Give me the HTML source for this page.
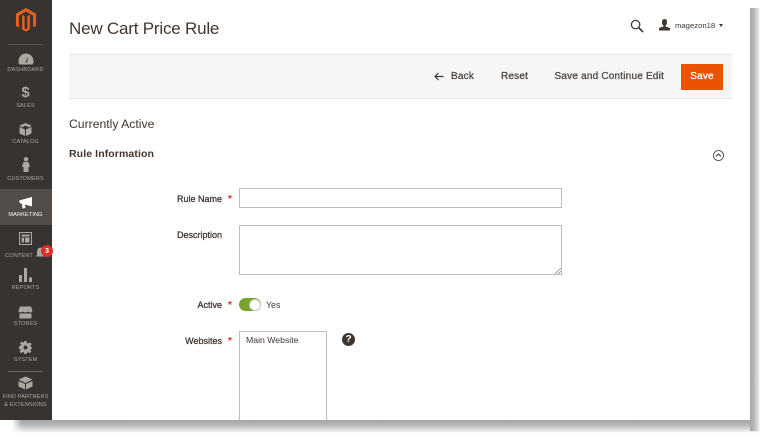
<!DOCTYPE html>
<html><head><meta charset="utf-8"><style>
html,body{margin:0;padding:0;background:#fff}
body{width:768px;height:439px;position:relative;overflow:hidden;font-family:"Liberation Sans",sans-serif;color:#41362f}
#w{position:absolute;left:0;top:0;width:768px;height:439px;filter:blur(.35px)}
.a{position:absolute;white-space:nowrap}
.n{position:absolute;left:0;width:51px;text-align:center;font-size:5.6px;line-height:8px;color:#aaa6a0;letter-spacing:.1px}
.l{position:absolute;right:546px;font-size:9px;line-height:12px;color:#41362f;white-space:nowrap;-webkit-text-stroke:.3px #41362f}
.s{position:absolute;left:228px;color:#e22626;font-size:10px;font-weight:bold;line-height:12px}
.b{position:absolute;font-size:10px;color:#514943;line-height:14px;letter-spacing:.2px;white-space:nowrap;-webkit-text-stroke:.3px #514943}
.i{position:absolute;background:#fff;border:1px solid #bdbdbd;box-sizing:border-box}
svg{position:absolute}
</style></head><body><div id="w">
<div class="a" style="left:12px;top:420px;width:747px;height:13px;background:linear-gradient(#a5a5a5,#b5b5b5 35%,#e8e8e8 85%,#fff);-webkit-mask-image:linear-gradient(90deg,transparent,#000 10px)"></div>
<div class="a" style="left:750px;top:8px;width:10px;height:423px;background:linear-gradient(90deg,#a5a5a5,#b5b5b5 35%,#e8e8e8 90%,#fff)"></div>
<div class="a" style="left:0;top:0;width:750px;height:420px;background:#fff"></div>
<div class="a" style="left:0;top:0;width:51.5px;height:420px;background:#373330"></div>
<div class="a" style="left:0;top:189px;width:51.5px;height:36px;background:#524d49"></div>
<div class="a" style="left:8px;top:44px;width:35px;height:1px;background:#5a5551"></div>
<div class="a" style="left:8px;top:371px;width:35px;height:1px;background:#6a6561"></div>

<svg style="left:15px;top:7px" width="22" height="25" viewBox="0 0 23 26"><path d="M11.500 1L22 7V19.500L19 21.300V9L11.500 4.600 4 9V21.300L1 19.500V7Z" fill="#ea6220"/><path d="M10 9.500V22L11.500 23 13 22V9.500L15.500 8V23.500L11.500 25.500 7.500 23.500V8Z" fill="#ea6220"/></svg>

<svg style="left:18px;top:53px" width="16" height="12" viewBox="0 0 16 12"><path d="M8 .5A7.500 7.500 0 0 1 15.500 8Q15.500 10.500 14.500 11.500H1.500Q.5 10.500 .5 8A7.500 7.500 0 0 1 8 .5Z" fill="#aaa6a0"/><path d="M7.500 9L10 3.500 9 9.500Z" fill="#373330"/></svg>
<div class="n" style="top:65.500px">DASHBOARD</div>
<div class="a" style="left:0;width:51px;text-align:center;top:85px;font-size:15px;font-weight:bold;line-height:16px;color:#aaa6a0">$</div>
<div class="n" style="top:102px">SALES</div>
<svg style="left:19px;top:123px" width="13" height="13" viewBox="0 0 13 13"><path d="M6.500 0L12.500 2.500 10 4.500 6.500 2.500 3 4.500 .5 2.500Z M.5 4L6 6.500V13L.5 10.500Z M12.500 4L7 6.500V13L12.500 10.500Z" fill="#aaa6a0"/></svg>
<div class="n" style="top:138px">CATALOG</div>
<svg style="left:22px;top:157px" width="8" height="15" viewBox="0 0 8 15"><circle cx="4" cy="2.200" r="2.200" fill="#aaa6a0"/><path d="M1.500 5H6.500L8 9.500 6.500 10V15H1.500V10L0 9.500Z" fill="#aaa6a0"/></svg>
<div class="n" style="top:174.500px">CUSTOMERS</div>
<svg style="left:19px;top:197px" width="14" height="12" viewBox="0 0 14 12"><path d="M0 3.500L2 3 13 0V9.500L6 7.500 6.500 11 3.500 11.500 3 6.500H1Z" fill="#fff"/></svg>
<div class="n" style="top:210.500px;color:#fff">MARKETING</div>
<svg style="left:19px;top:232px" width="13" height="13" viewBox="0 0 13 13"><path d="M.5 .5H12.500V12.500H.5Z" fill="none" stroke="#aaa6a0"/><path d="M2.500 2.500H10.500V4.500H2.500ZM2.500 5.500H5V10.500H2.500ZM6 5.500H10.500V10.500H6Z" fill="#aaa6a0"/></svg>
<div class="n" style="top:251.500px;left:-2px;width:42px">CONTENT</div>
<svg style="left:36px;top:247px" width="9" height="11" viewBox="0 0 9 11"><path d="M4.500 .5Q8 1 8 5V8L9 9.500H0L1 8V5Q1 1 4.500 .5Z" fill="#aaa6a0"/></svg>
<div class="a" style="left:41px;top:245px;width:12px;height:12px;border-radius:50%;background:#e02b27;color:#fff;font-size:7.500px;font-weight:bold;line-height:12px;text-align:center">3</div>
<svg style="left:19px;top:268px" width="13" height="14" viewBox="0 0 13 14"><path d="M0 7H3V14H0ZM5 0H8V14H5ZM10 9.500H13V14H10Z" fill="#aaa6a0"/></svg>
<div class="n" style="top:283.500px">REPORTS</div>
<svg style="left:18px;top:306px" width="15" height="13" viewBox="0 0 15 13"><path d="M2 .5H13L14.500 5Q14 6.500 12.500 6.500T10 5.500Q9 6.500 7.500 6.500T5 5.500Q4 6.500 2.500 6.500T.5 5ZM1.500 7.500H13.500V12.500H1.500Z" fill="#aaa6a0"/></svg>
<div class="n" style="top:320px">STORES</div>
<svg style="left:19px;top:341px" width="13" height="13" viewBox="0 0 13 13"><path d="M5.300 0H7.700L8 2 9.300 2.500 11 1.400 12.600 3 11.500 4.700 12 6 13 6.500V7.500L11.500 8.300 11.500 9 12.300 10.600 10.600 12.300 9 11.200 8 11.600 7.700 13H5.300L5 11.500 3.800 11 2.200 12.300 .6 10.600 1.600 9 1.200 8 0 7.700V5.300L1.500 5 2 3.800 .9 2.200 2.500 .6 4 1.600 5 1.300Z" fill="#aaa6a0"/><circle cx="6.500" cy="6.500" r="2" fill="#373330"/></svg>
<div class="n" style="top:356px">SYSTEM</div>
<svg style="left:18px;top:376px" width="15" height="14" viewBox="0 0 15 14"><path d="M7.500 .5L14.500 3.500 7.500 7 .5 3.500ZM.5 5L7 8V13.500L.5 10.500ZM14.500 5L8 8V13.500L14.500 10.500Z" fill="#aaa6a0"/></svg>
<div class="n" style="top:392.500px">FIND PARTNERS</div>
<div class="n" style="top:400.500px">&amp; EXTENSIONS</div>

<div class="a" style="left:69px;top:19px;font-size:17px;line-height:20px;color:#41362f;letter-spacing:-.2px">New Cart Price Rule</div>
<svg style="left:630px;top:19px" width="14" height="14" viewBox="0 0 15 15"><circle cx="6" cy="6" r="4.500" fill="none" stroke="#41362f" stroke-width="1.300"/><path d="M9.500 9.500L14 14" stroke="#41362f" stroke-width="1.800"/></svg>
<svg style="left:658px;top:19px" width="13" height="12" viewBox="0 0 12 12"><path d="M6 0Q8.500 0 8.500 3T7 6.500V7.500L11.500 9V11.500H.5V9L5 7.500V6.500Q3.500 6 3.500 3T6 0Z" fill="#41362f"/></svg>
<div class="a" style="left:675px;top:20px;font-size:7.700px;line-height:12px;color:#41362f">magezon18</div>
<div class="a" style="left:719px;top:24px;width:0;height:0;border:2.500px solid transparent;border-top:3px solid #41362f;border-bottom:0"></div>

<div class="a" style="left:69px;top:54px;width:663px;height:45px;background:#f6f6f6;border-top:1px solid #e6e6e6;border-bottom:1px solid #e6e6e6;box-sizing:border-box"></div>
<svg style="left:434px;top:72px" width="10" height="9" viewBox="0 0 10 9"><path d="M9.500 4.500H1.500M4.500 1L1 4.500 4.500 8" fill="none" stroke="#41362f" stroke-width="1.200"/></svg>
<div class="b" style="left:451px;top:70px">Back</div>
<div class="b" style="left:501px;top:70px">Reset</div>
<div class="b" style="left:554.500px;top:70px">Save and Continue Edit</div>
<div class="a" style="left:681px;top:64px;width:42px;height:26px;background:#eb5202;color:#fff;font-size:10px;line-height:26px;text-align:center;letter-spacing:.2px;-webkit-text-stroke:.3px #fff">Save</div>

<div class="a" style="left:69px;top:117px;font-size:12.200px;line-height:15px;color:#41362f">Currently Active</div>
<div class="a" style="left:69px;top:147px;font-size:10.500px;font-weight:bold;line-height:14px;color:#41362f;letter-spacing:.1px">Rule Information</div>
<svg style="left:713px;top:150px" width="11" height="11" viewBox="0 0 11 11"><circle cx="5.500" cy="5.500" r="5" fill="none" stroke="#41362f" stroke-width=".8"/><path d="M3 6.500L5.500 4 8 6.500" fill="none" stroke="#41362f"/></svg>

<div class="l" style="top:193px">Rule Name</div><div class="s" style="top:194px">*</div>
<div class="i" style="left:239px;top:188px;width:323px;height:20px"></div>
<div class="l" style="top:229px">Description</div>
<div class="i" style="left:239px;top:225px;width:323px;height:50px"></div>
<svg style="left:555px;top:268px" width="6" height="6" viewBox="0 0 6 6"><path d="M0 6L6 0M3 6L6 3" stroke="#777" stroke-width=".7"/></svg>
<div class="l" style="top:299px">Active</div><div class="s" style="top:300px">*</div>
<div class="a" style="left:239px;top:298px;width:22px;height:13px;border-radius:7px;background:#79a22e"></div>
<div class="a" style="left:249px;top:298.500px;width:12px;height:12px;border-radius:50%;background:#fff;box-sizing:border-box;border:1px solid #c8c8c8"></div>
<div class="a" style="left:266px;top:299px;font-size:8.800px;line-height:12px;color:#41362f">Yes</div>
<div class="l" style="top:335px">Websites</div><div class="s" style="top:336px">*</div>
<div class="i" style="left:239px;top:331px;width:88px;height:89px;border-bottom:0"></div>
<div class="a" style="left:246px;top:334px;font-size:8.700px;line-height:12px;color:#41362f">Main Website</div>
<div class="a" style="left:342px;top:333px;width:13px;height:13px;border-radius:50%;background:#41362f;color:#fff;font-size:10px;font-weight:bold;line-height:13px;text-align:center">?</div>
</div></body></html>
